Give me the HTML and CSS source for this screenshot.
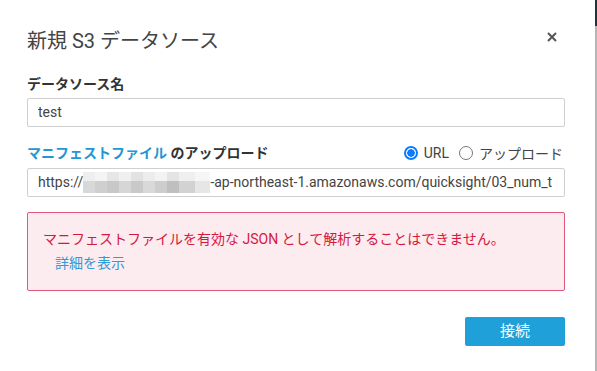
FILE: index.html
```html
<!DOCTYPE html>
<html lang="ja">
<head>
  <meta charset="UTF-8">
  <title>新規 S3 データソース</title>
  <link rel="stylesheet" href="styles.css">
</head>
<body>

<div id="page">
  <div class="dialog">
    <div class="dialog-header">
      <h1 class="title">新規 S3 データソース</h1>
      <span class="close">
        <svg width="10" height="10" viewBox="0 0 10 10">
          <path d="M1 1 L9 9 M9 1 L1 9" stroke="#555" stroke-width="2" fill="none"/>
        </svg>
      </span>
    </div>

    <div class="label">データソース名</div>
    <div class="field"><div class="field-text">test</div></div>

    <div class="label-row">
      <div class="label"><span class="link">マニフェストファイル</span> のアップロード</div>
      <div class="radios">
        <span class="radio checked"></span><span class="radio-text">URL</span>
        <span class="radio"></span><span class="radio-text">アップロード</span>
      </div>
    </div>
    <div class="field url"><div class="field-text">https://<span class="mosaic"></span>-ap-northeast-1.amazonaws.com/quicksight/03_num_test.json</div></div>

    <div class="error">
      <div class="error-text">マニフェストファイルを有効な JSON として解析することはできません。</div>
      <div class="error-link">詳細を表示</div>
    </div>

    <div class="footer">
      <div class="btn">接続</div>
    </div>
  </div>
  <div class="edge"></div>
</div>

</body>
</html>
```

FILE: styles.css
```css
body{
  margin: 0;
  font-family: Roboto, "Noto Sans CJK JP", sans-serif;
  color: #333;
  background: #fff;
}
#page{
  display: flex;
  height: 371px;
}
.dialog{
  width: 538px;
  padding: 0 30px 0 27px;
  background: #fff;
}
.edge{
  width: 2px;
  background: linear-gradient(to bottom, #1d3640 0, #1d3640 26px, #b5b5b5 26px);
}

.dialog-header{
  display: flex;
  justify-content: space-between;
  align-items: center;
  padding-top: 27px;
  height: 28px;
}
.title{
  margin: 0;
  font-size: 20px;
  font-weight: normal;
  line-height: 28px;
  color: #444;
}
.close{
  display: flex;
  margin-right: 8px;
  margin-top: -8px;
}

.label{
  font-size: 14px;
  font-weight: bold;
  line-height: 20px;
  color: #333;
}
.dialog-header + .label{
  margin-top: 19px;
}
.field{
  box-sizing: border-box;
  height: 29px;
  margin-top: 4px;
  padding: 0 12px 0 10px;
  border: 1px solid #cfcfcf;
  border-radius: 2px;
  font-size: 14px;
  line-height: 27px;
  color: #444;
}
.field-text{
  white-space: nowrap;
  overflow: hidden;
}
.label-row{
  display: flex;
  justify-content: space-between;
  align-items: center;
  margin-top: 16px;
}
.link{
  color: #2496d6;
}
.radios{
  display: flex;
  align-items: center;
  font-size: 14px;
  color: #444;
  margin-right: 2px;
}
.radio{
  box-sizing: border-box;
  width: 14px;
  height: 14px;
  border-radius: 50%;
  border: 1px solid #777;
  background: #fff;
  margin-right: 6px;
}
.radio.checked{
  border: 2px solid #0a7cff;
  background: radial-gradient(circle, #0a7cff 0, #0a7cff 3.5px, #fff 4px);
}
.radio-text{
  margin-right: 10px;
}
.radio-text:last-child{
  margin-right: 0;
}
.field.url{
  margin-top: 5px;
}
.mosaic{
  display: inline-block;
  width: 127px;
  height: 21px;
  vertical-align: -6px;
  background:
    linear-gradient(to right, #eee 0, #eee 12px, #f4f4f4 12px, #f4f4f4 24px, #e6e6e6 24px, #e6e6e6 36px, #f0f0f0 36px, #f0f0f0 48px, #e2e2e2 48px, #e2e2e2 60px, #ececec 60px, #ececec 72px, #f3f3f3 72px, #f3f3f3 84px, #e4e4e4 84px, #e4e4e4 96px, #efefef 96px, #efefef 112px, #f6f6f6 112px) top / 100% 9px no-repeat,
    linear-gradient(to right, #d8d8d8 0, #d8d8d8 12px, #cfcfcf 12px, #cfcfcf 24px, #c8c8c8 24px, #c8c8c8 36px, #d6d6d6 36px, #d6d6d6 48px, #c9c9c9 48px, #c9c9c9 60px, #d9d9d9 60px, #d9d9d9 72px, #cdcdcd 72px, #cdcdcd 84px, #bfbfbf 84px, #bfbfbf 96px, #d2d2d2 96px, #d2d2d2 112px, #e6e6e6 112px) bottom / 100% 12px no-repeat;
}

.error{
  margin-top: 15px;
  height: 79px;
  box-sizing: border-box;
  padding: 16px 15px 0;
  border: 1px solid #e2577c;
  border-radius: 2px;
  background: #fcebef;
  font-size: 14px;
  line-height: 20px;
}
.error-text{
  color: #d6173f;
}
.error-link{
  margin-top: 4px;
  margin-left: 12px;
  color: #2f9ad6;
}

.footer{
  display: flex;
  justify-content: flex-end;
  margin-top: 26px;
}
.btn{
  width: 100px;
  height: 29px;
  border-radius: 2px;
  background: #20a0d8;
  color: #fff;
  font-size: 15px;
  line-height: 29px;
  text-align: center;
}
```
